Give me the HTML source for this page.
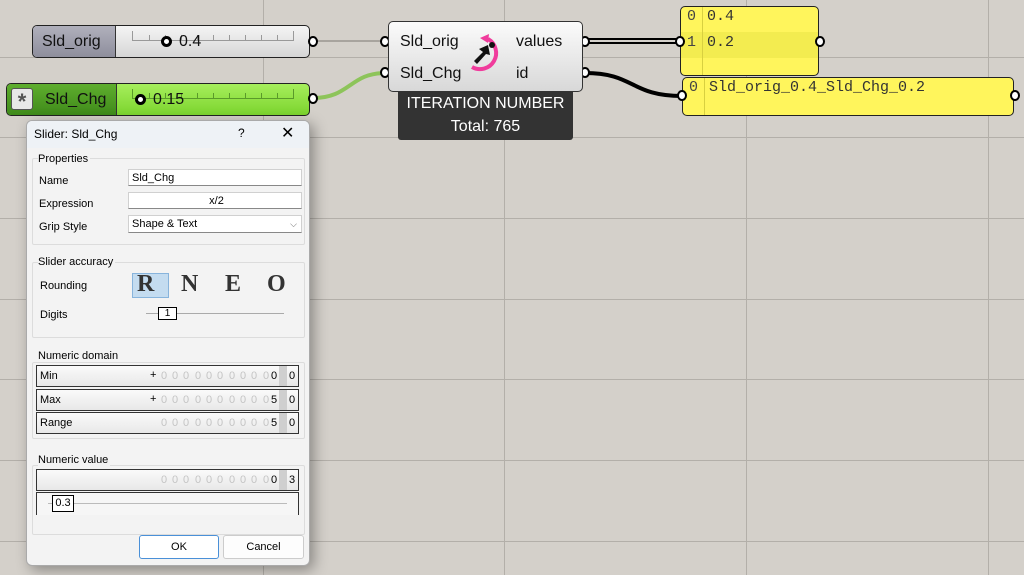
<!DOCTYPE html>
<html><head><meta charset="utf-8"><style>
*{margin:0;padding:0;box-sizing:border-box}
body{width:1024px;height:575px;overflow:hidden;position:relative;background:#d4d0ca;font-family:"Liberation Sans",sans-serif}
.a{position:absolute}
.vl{position:absolute;top:0;width:1px;height:575px;background:#b3afa9}
.hl{position:absolute;left:0;height:1px;width:1024px;background:#b3afa9}
.t{position:absolute;white-space:nowrap}
.dlg{font-size:11px;color:#000}
.grp{position:absolute;border:1px solid #dcdcdc;border-radius:2px}
.inp{position:absolute;background:#fff;border:1px solid #d0d0d0;border-bottom:1px solid #888;font-size:11px;padding-left:3px;line-height:16px}
.row{position:absolute;left:36px;width:263px;height:22px;border:1px solid #333;background:linear-gradient(#fafafa,#e8e8e8);font-size:11px}
.row .lb{position:absolute;left:3px;top:4px}
.row .d{position:absolute;top:4px;color:#c4c4c4}
.row .g{position:absolute;left:242px;top:0;width:8px;height:20px;background:#cfcfcf}
.row .b{position:absolute;top:4px;color:#000}
.tk{position:absolute;top:0;width:1px;height:5px;background:#999}
</style></head><body>
<div class="vl" style="left:263px"></div><div class="vl" style="left:504px"></div><div class="vl" style="left:746px"></div><div class="vl" style="left:988px"></div>
<div class="hl" style="top:57px"></div><div class="hl" style="top:137px"></div><div class="hl" style="top:218px"></div><div class="hl" style="top:299px"></div><div class="hl" style="top:379px"></div><div class="hl" style="top:460px"></div><div class="hl" style="top:541px"></div>

<svg class="a" style="left:0;top:0" width="1024" height="575">
<path d="M313 41 L385 41" stroke="#9a9690" stroke-width="1.5" fill="none"/>
<path d="M313 98 C350 98 350 73 385 73" stroke="#8dc45a" stroke-width="4" fill="none"/>
<path d="M585 39 L678 39 M585 43 L678 43" stroke="#000" stroke-width="2" fill="none"/>
<path d="M585 73 C635 73 630 96 682 96" stroke="#000" stroke-width="4" fill="none"/>
</svg>

<!-- Sld_orig slider -->
<div class="a" style="left:32px;top:25px;width:278px;height:33px;border:1.5px solid #222;border-radius:5px;background:linear-gradient(#f4f4f4,#d6d6d6);overflow:hidden">
 <div class="a" style="left:0;top:0;width:83px;height:31px;background:linear-gradient(#b0b0bc,#8e8e9c);border-right:1px solid #333"></div>
 <div class="t" style="left:9px;top:7px;font-size:16px;color:#111">Sld_orig</div>
 <div class="a" style="left:99px;top:5px;width:162px;height:10px;border-bottom:1px solid #999;border-left:1px solid #999;border-right:1px solid #999">
  <div class="tk" style="left:16px;top:4px"></div><div class="tk" style="left:32px;top:4px"></div><div class="tk" style="left:48px;top:4px"></div><div class="tk" style="left:64px;top:4px"></div><div class="tk" style="left:80px;top:4px"></div><div class="tk" style="left:96px;top:4px"></div><div class="tk" style="left:112px;top:4px"></div><div class="tk" style="left:128px;top:4px"></div><div class="tk" style="left:144px;top:4px"></div></div>
 <div class="a" style="left:128px;top:10px;width:11px;height:11px;border:3px solid #000;border-radius:50%;background:#fff"></div>
 <div class="t" style="left:146px;top:7px;font-size:16px;color:#111">0.4</div>
</div>
<div class="a" style="left:308px;top:36px;width:10px;height:11px;border:2px solid #000;border-radius:50%;background:#fff"></div>

<!-- Sld_Chg slider -->
<div class="a" style="left:6px;top:83px;width:304px;height:33px;border:1.5px solid #222;border-radius:5px;background:linear-gradient(#a6ee5c,#7cd42e);overflow:hidden">
 <div class="a" style="left:0;top:0;width:110px;height:31px;background:linear-gradient(#5fae2e,#3f8a1a);border-right:1px solid #333"></div>
 <div class="a" style="left:4px;top:4px;width:22px;height:22px;background:#e8e8e8;border:1px solid #555;border-radius:3px;font-size:22px;line-height:26px;text-align:center;color:#555;font-weight:bold">*</div>
 <div class="t" style="left:38px;top:7px;font-size:16px;color:#111">Sld_Chg</div>
 <div class="a" style="left:125px;top:5px;width:162px;height:10px;border-bottom:1px solid #5a9a2a;border-left:1px solid #5a9a2a;border-right:1px solid #5a9a2a">
  <div class="tk" style="left:16px;top:4px;background:#5a9a2a"></div><div class="tk" style="left:32px;top:4px;background:#5a9a2a"></div><div class="tk" style="left:48px;top:4px;background:#5a9a2a"></div><div class="tk" style="left:64px;top:4px;background:#5a9a2a"></div><div class="tk" style="left:80px;top:4px;background:#5a9a2a"></div><div class="tk" style="left:96px;top:4px;background:#5a9a2a"></div><div class="tk" style="left:112px;top:4px;background:#5a9a2a"></div><div class="tk" style="left:128px;top:4px;background:#5a9a2a"></div><div class="tk" style="left:144px;top:4px;background:#5a9a2a"></div></div>
 <div class="a" style="left:128px;top:10px;width:11px;height:11px;border:3px solid #000;border-radius:50%;background:#fff"></div>
 <div class="t" style="left:146px;top:7px;font-size:16px;color:#111">0.15</div>
</div>
<div class="a" style="left:308px;top:93px;width:10px;height:11px;border:2px solid #000;border-radius:50%;background:#fff"></div>

<!-- component -->
<div class="a" style="left:380px;top:36px;width:10px;height:11px;border:2px solid #000;border-radius:50%;background:#fff"></div>
<div class="a" style="left:380px;top:67px;width:10px;height:11px;border:2px solid #000;border-radius:50%;background:#fff"></div>
<div class="a" style="left:580px;top:36px;width:10px;height:11px;border:2px solid #000;border-radius:50%;background:#fff"></div>
<div class="a" style="left:580px;top:67px;width:10px;height:11px;border:2px solid #000;border-radius:50%;background:#fff"></div>
<div class="a" style="left:398px;top:88px;width:175px;height:52px;background:#333;border-radius:3px"></div>
<div class="t" style="left:398px;top:95px;width:175px;text-align:center;font-size:16px;color:#fff">ITERATION NUMBER</div>
<div class="t" style="left:398px;top:118px;width:175px;text-align:center;font-size:16px;color:#fff">Total: 765</div>
<div class="a" style="left:388px;top:21px;width:195px;height:71px;border:1.5px solid #333;border-radius:5px;background:linear-gradient(#fbfbfb,#d8d8d8)"></div>
<div class="t" style="left:400px;top:33px;font-size:16px;color:#111">Sld_orig</div>
<div class="t" style="left:400px;top:65px;font-size:16px;color:#111">Sld_Chg</div>
<div class="t" style="left:516px;top:33px;font-size:16px;color:#111">values</div>
<div class="t" style="left:516px;top:65px;font-size:16px;color:#111">id</div>
<svg class="a" style="left:466px;top:33px" width="40" height="44">
<path d="M22 6 A15 15 0 1 1 6 34" stroke="#f03c9c" stroke-width="4" fill="none"/>
<path d="M14 5 L23 1 L22 10 Z" fill="#f03c9c"/>
<path d="M8 28 L17 19 L13 16 L22 12 L24 22 L20 21 L11 31 Z" fill="#111"/>
<circle cx="26" cy="12" r="3" fill="#111"/>
</svg>

<!-- panels -->
<div class="a" style="left:680px;top:6px;width:139px;height:70px;border:1.5px solid #222;border-radius:5px;background:#fff55c;overflow:hidden">
 <div class="a" style="left:0;top:25px;width:139px;height:26px;background:#f3ec50"></div>
 <div class="a" style="left:21px;top:0;width:1px;height:70px;background:#d8d040"></div>
</div>
<div class="t" style="left:687px;top:8px;font-family:'Liberation Mono',monospace;font-size:15px;color:#444">0</div>
<div class="t" style="left:707px;top:8px;font-family:'Liberation Mono',monospace;font-size:15px;color:#333">0.4</div>
<div class="t" style="left:687px;top:34px;font-family:'Liberation Mono',monospace;font-size:15px;color:#444">1</div>
<div class="t" style="left:707px;top:34px;font-family:'Liberation Mono',monospace;font-size:15px;color:#333">0.2</div>
<div class="a" style="left:675px;top:36px;width:10px;height:11px;border:2px solid #000;border-radius:50%;background:#fff"></div>
<div class="a" style="left:815px;top:36px;width:10px;height:11px;border:2px solid #000;border-radius:50%;background:#fff"></div>
<div class="a" style="left:682px;top:77px;width:332px;height:39px;border:1.5px solid #222;border-radius:5px;background:#fff55c;overflow:hidden">
 <div class="a" style="left:21px;top:0;width:1px;height:39px;background:#d8d040"></div>
</div>
<div class="t" style="left:689px;top:79px;font-family:'Liberation Mono',monospace;font-size:15px;color:#444">0</div>
<div class="t" style="left:709px;top:79px;font-family:'Liberation Mono',monospace;font-size:15px;color:#333">Sld_orig_0.4_Sld_Chg_0.2</div>
<div class="a" style="left:677px;top:90px;width:10px;height:11px;border:2px solid #000;border-radius:50%;background:#fff"></div>
<div class="a" style="left:1010px;top:90px;width:10px;height:11px;border:2px solid #000;border-radius:50%;background:#fff"></div>

<!-- dialog -->
<div class="a dlg" style="left:26px;top:120px;width:284px;height:446px;background:#f3f3f3;border:1px solid #aaa;border-radius:6px;box-shadow:4px 4px 14px rgba(0,0,0,.35);overflow:hidden">
 <div class="a" style="left:0;top:0;width:284px;height:27px;background:#eef2f6"></div>
 <div class="t" style="left:7px;top:6px;font-size:12px">Slider: Sld_Chg</div>
 <div class="t" style="left:211px;top:5px;font-size:12px">?</div>
 <div class="t" style="left:254px;top:2px;font-size:16px">✕</div>

 <div class="grp" style="left:5px;top:37px;width:273px;height:87px"></div>
 <div class="t" style="left:11px;top:32px;background:#f3f3f3;padding-right:2px">Properties</div>
 <div class="t" style="left:12px;top:54px">Name</div>
 <div class="inp" style="left:101px;top:48px;width:174px;height:17px">Sld_Chg</div>
 <div class="t" style="left:12px;top:77px">Expression</div>
 <div class="inp" style="left:101px;top:71px;width:174px;height:17px;text-align:center">x/2</div>
 <div class="t" style="left:12px;top:100px">Grip Style</div>
 <div class="inp" style="left:101px;top:94px;width:174px;height:18px">Shape &amp; Text<span style="position:absolute;right:4px;top:0;font-size:9px;color:#666">⌵</span></div>

 <div class="grp" style="left:5px;top:141px;width:273px;height:76px"></div>
 <div class="t" style="left:11px;top:135px;background:#f3f3f3;padding-right:2px">Slider accuracy</div>
 <div class="t" style="left:13px;top:159px">Rounding</div>
 <div class="a" style="left:105px;top:152px;width:37px;height:25px;background:#c4dcf0;border:1px solid #88b4dc"></div>
 <div class="t" style="left:110px;top:150px;font-family:'Liberation Serif',serif;font-size:24px;font-weight:bold;color:#333">R</div>
 <div class="t" style="left:154px;top:150px;font-family:'Liberation Serif',serif;font-size:24px;font-weight:bold;color:#333">N</div>
 <div class="t" style="left:198px;top:150px;font-family:'Liberation Serif',serif;font-size:24px;font-weight:bold;color:#333">E</div>
 <div class="t" style="left:240px;top:150px;font-family:'Liberation Serif',serif;font-size:24px;font-weight:bold;color:#333">O</div>
 <div class="t" style="left:13px;top:188px">Digits</div>
 <div class="a" style="left:119px;top:192px;width:138px;height:1px;background:#aaa"></div>
 <div class="a" style="left:131px;top:186px;width:19px;height:13px;background:#fff;border:1px solid #000;text-align:center;font-size:10px;line-height:11px">1</div>

 <div class="grp" style="left:5px;top:241px;width:273px;height:77px"></div>
 <div class="t" style="left:11px;top:229px;background:#f3f3f3;padding-right:2px">Numeric domain</div>
 <div class="grp" style="left:5px;top:344px;width:273px;height:70px"></div>
 <div class="t" style="left:11px;top:333px;background:#f3f3f3;padding-right:2px">Numeric value</div>
 <div class="a" style="left:112px;top:414px;width:80px;height:24px;background:#fff;border:1px solid #4a90d8;border-radius:3px;text-align:center;line-height:22px;font-size:11px">OK</div>
 <div class="a" style="left:196px;top:414px;width:81px;height:24px;background:#fdfdfd;border:1px solid #ccc;border-radius:3px;text-align:center;line-height:22px;font-size:11px">Cancel</div>
</div>

<div class="row" style="top:365px"><span class="lb">Min</span><span class="b" style="left:113px;top:3px">+</span>
<span class="d" style="left:124px">0</span><span class="d" style="left:135px">0</span><span class="d" style="left:146px">0</span><span class="d" style="left:158px">0</span><span class="d" style="left:169px">0</span><span class="d" style="left:180px">0</span><span class="d" style="left:192px">0</span><span class="d" style="left:203px">0</span><span class="d" style="left:214px">0</span><span class="d" style="left:226px">0</span>
<span class="b" style="left:234px">0</span><div class="g"></div><span class="b" style="left:252px">0</span></div>
<div class="row" style="top:389px"><span class="lb">Max</span><span class="b" style="left:113px;top:3px">+</span>
<span class="d" style="left:124px">0</span><span class="d" style="left:135px">0</span><span class="d" style="left:146px">0</span><span class="d" style="left:158px">0</span><span class="d" style="left:169px">0</span><span class="d" style="left:180px">0</span><span class="d" style="left:192px">0</span><span class="d" style="left:203px">0</span><span class="d" style="left:214px">0</span><span class="d" style="left:226px">0</span>
<span class="b" style="left:234px">5</span><div class="g"></div><span class="b" style="left:252px">0</span></div>
<div class="row" style="top:412px"><span class="lb">Range</span>
<span class="d" style="left:124px">0</span><span class="d" style="left:135px">0</span><span class="d" style="left:146px">0</span><span class="d" style="left:158px">0</span><span class="d" style="left:169px">0</span><span class="d" style="left:180px">0</span><span class="d" style="left:192px">0</span><span class="d" style="left:203px">0</span><span class="d" style="left:214px">0</span><span class="d" style="left:226px">0</span>
<span class="b" style="left:234px">5</span><div class="g"></div><span class="b" style="left:252px">0</span></div>
<div class="row" style="top:469px">
<span class="d" style="left:124px">0</span><span class="d" style="left:135px">0</span><span class="d" style="left:146px">0</span><span class="d" style="left:158px">0</span><span class="d" style="left:169px">0</span><span class="d" style="left:180px">0</span><span class="d" style="left:192px">0</span><span class="d" style="left:203px">0</span><span class="d" style="left:214px">0</span><span class="d" style="left:226px">0</span>
<span class="b" style="left:234px">0</span><div class="g"></div><span class="b" style="left:252px">3</span></div>
<div class="a" style="left:36px;top:492px;width:263px;height:23px;border:1px solid #333;border-bottom:none;background:#f6f6f6"></div>
<div class="a" style="left:48px;top:503px;width:239px;height:1px;background:#bbb"></div>
<div class="a" style="left:52px;top:495px;width:22px;height:17px;background:#fff;border:1px solid #000;font-size:11px;text-align:center;line-height:15px">0.3</div>
</body></html>
